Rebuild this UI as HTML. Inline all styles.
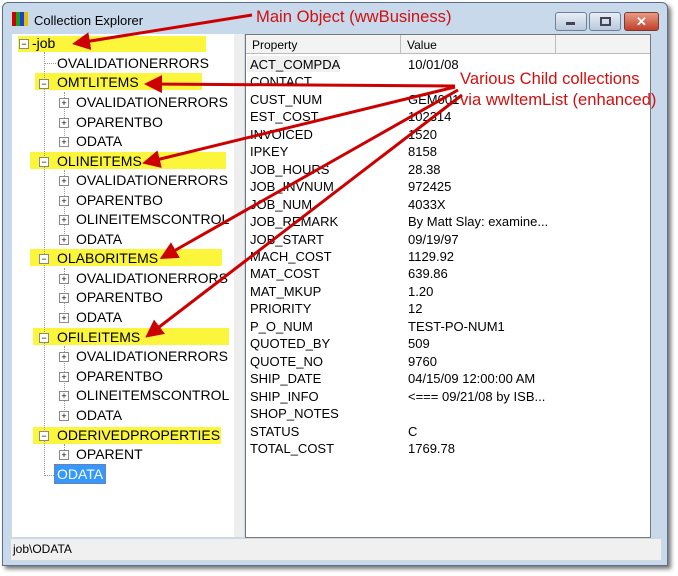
<!DOCTYPE html><html><head><style>
body{margin:0;width:678px;height:576px;background:#fff;position:relative;overflow:hidden;font-family:"Liberation Sans",sans-serif;}
.a{position:absolute}
.win{left:2px;top:2px;width:664px;height:562px;background:#c9d9ec;border:1px solid #5d6f86;border-radius:6px 6px 0 0;box-shadow:3px 3px 4px #777}
.t{font-size:14px;color:#000;white-space:nowrap}
.hl{background:#fbf53c}
.box{width:8px;height:8px;border:1px solid #888;background:#fff;font-size:9px;line-height:8px;text-align:center;color:#000}
.dv{border-left:1px dotted #999}
.dh{border-top:1px dotted #999}
</style></head><body>
<div class="a win"></div>
<div class="a" style="left:12px;top:12px;width:16px;height:14px;background:linear-gradient(90deg,#c00 0 25%,#1a9e1a 25% 50%,#1a3ee0 50% 75%,#e0c000 75%)"></div>
<div class="a t" style="left:34px;top:13px;font-size:13px">Collection Explorer</div>
<div class="a" style="left:555px;top:12px;width:30px;height:17px;border:1px solid #6e7f96;border-radius:3px;background:linear-gradient(#e8eef6,#b9c9dc)"><div class="a" style="left:10px;top:9px;width:9px;height:3px;background:#445"></div></div>
<div class="a" style="left:589px;top:12px;width:30px;height:17px;border:1px solid #6e7f96;border-radius:3px;background:linear-gradient(#e8eef6,#b9c9dc)"><div class="a" style="left:10px;top:4px;width:7px;height:5px;border:2px solid #445"></div></div>
<div class="a" style="left:624px;top:12px;width:33px;height:17px;border:1px solid #7a3a2a;border-radius:3px;background:linear-gradient(#e89a85,#c2402a);color:#fff;font-weight:bold;font-size:13px;text-align:center;line-height:17px">✕</div>
<div class="a" style="left:12px;top:34px;width:222px;height:503px;background:#fff"></div>
<div class="a" style="left:234px;top:34px;width:10px;height:503px;background:#eeeeee"></div>
<div class="a" style="left:245px;top:34px;width:404px;height:502px;background:#fff;border:1px solid #777"></div>
<div class="a" style="left:246px;top:35px;width:404px;height:18px;background:#f3f3f3;border-bottom:1px solid #bbb"></div>
<div class="a" style="left:400px;top:35px;width:1px;height:18px;background:#bbb"></div>
<div class="a" style="left:555px;top:35px;width:1px;height:18px;background:#bbb"></div>
<div class="a t" style="left:252px;top:38px;font-size:12px">Property</div>
<div class="a t" style="left:407px;top:38px;font-size:12px">Value</div>
<div class="a" style="left:247px;top:56px;width:93px;height:16px;background:#f0f0f0"></div>
<div class="a" style="left:250px;top:56px;font-size:13px;line-height:17.45px;white-space:pre">ACT_COMPDA
CONTACT
CUST_NUM
EST_COST
INVOICED
IPKEY
JOB_HOURS
JOB_INVNUM
JOB_NUM
JOB_REMARK
JOB_START
MACH_COST
MAT_COST
MAT_MKUP
PRIORITY
P_O_NUM
QUOTED_BY
QUOTE_NO
SHIP_DATE
SHIP_INFO
SHOP_NOTES
STATUS
TOTAL_COST</div>
<div class="a" style="left:408px;top:56px;font-size:13px;line-height:17.45px;white-space:pre">10/01/08

GEM001
102314
1520
8158
28.38
972425
4033X
By Matt Slay: examine...
09/19/97
1129.92
639.86
1.20
12
TEST-PO-NUM1
509
9760
04/15/09 12:00:00 AM
&lt;=== 09/21/08 by ISB...

C
1769.78</div>
<div class="a" style="left:10px;top:538px;width:650px;height:21px;background:#f0f0f0;border:1px solid #d0d8e0"></div>
<div class="a t" style="left:13px;top:542px;font-size:12px">job\ODATA</div>
<div class="a hl" style="left:18px;top:36px;width:188px;height:16px"></div>
<div class="a hl" style="left:35px;top:73px;width:167px;height:17px"></div>
<div class="a hl" style="left:30px;top:152px;width:196px;height:17px"></div>
<div class="a hl" style="left:30px;top:249px;width:192px;height:17px"></div>
<div class="a hl" style="left:33px;top:328px;width:196px;height:17px"></div>
<div class="a hl" style="left:33px;top:427px;width:188px;height:17px"></div>
<div class="a dv" style="left:44px;top:52px;height:424px"></div>
<div class="a dv" style="left:64px;top:92px;height:52px"></div>
<div class="a dv" style="left:64px;top:170px;height:72px"></div>
<div class="a dv" style="left:64px;top:268px;height:52px"></div>
<div class="a dv" style="left:64px;top:346px;height:72px"></div>
<div class="a dv" style="left:64px;top:444px;height:12px"></div>
<div class="a dh" style="left:44px;top:475px;width:10px"></div>
<div class="a dh" style="left:44px;top:63px;width:12px"></div>
<div class="a box" style="left:19px;top:39px">−</div><div class="a t" style="left:32px;top:35px">-job</div>
<div class="a t" style="left:57px;top:55px">OVALIDATIONERRORS</div>
<div class="a box" style="left:39px;top:79px">−</div><div class="a t" style="left:57px;top:74px">OMTLITEMS</div>
<div class="a box" style="left:59px;top:98px">+</div><div class="a t" style="left:76px;top:94px">OVALIDATIONERRORS</div>
<div class="a box" style="left:59px;top:118px">+</div><div class="a t" style="left:76px;top:114px">OPARENTBO</div>
<div class="a box" style="left:59px;top:137px">+</div><div class="a t" style="left:76px;top:133px">ODATA</div>
<div class="a box" style="left:39px;top:157px">−</div><div class="a t" style="left:57px;top:153px">OLINEITEMS</div>
<div class="a box" style="left:59px;top:176px">+</div><div class="a t" style="left:76px;top:172px">OVALIDATIONERRORS</div>
<div class="a box" style="left:59px;top:196px">+</div><div class="a t" style="left:76px;top:192px">OPARENTBO</div>
<div class="a box" style="left:59px;top:215px">+</div><div class="a t" style="left:76px;top:211px">OLINEITEMSCONTROL</div>
<div class="a box" style="left:59px;top:235px">+</div><div class="a t" style="left:76px;top:231px">ODATA</div>
<div class="a box" style="left:39px;top:254px">−</div><div class="a t" style="left:57px;top:250px">OLABORITEMS</div>
<div class="a box" style="left:59px;top:274px">+</div><div class="a t" style="left:76px;top:270px">OVALIDATIONERRORS</div>
<div class="a box" style="left:59px;top:293px">+</div><div class="a t" style="left:76px;top:289px">OPARENTBO</div>
<div class="a box" style="left:59px;top:313px">+</div><div class="a t" style="left:76px;top:309px">ODATA</div>
<div class="a box" style="left:39px;top:333px">−</div><div class="a t" style="left:57px;top:329px">OFILEITEMS</div>
<div class="a box" style="left:59px;top:352px">+</div><div class="a t" style="left:76px;top:348px">OVALIDATIONERRORS</div>
<div class="a box" style="left:59px;top:372px">+</div><div class="a t" style="left:76px;top:368px">OPARENTBO</div>
<div class="a box" style="left:59px;top:391px">+</div><div class="a t" style="left:76px;top:387px">OLINEITEMSCONTROL</div>
<div class="a box" style="left:59px;top:411px">+</div><div class="a t" style="left:76px;top:407px">ODATA</div>
<div class="a box" style="left:39px;top:431px">−</div><div class="a t" style="left:57px;top:427px">ODERIVEDPROPERTIES</div>
<div class="a box" style="left:59px;top:450px">+</div><div class="a t" style="left:76px;top:446px">OPARENT</div>
<div class="a t" style="left:54px;top:464px;background:#3399ff;color:#fff;padding:1px 2px;border:1px dotted #a66">ODATA</div>
<svg class="a" style="left:0;top:0" width="678" height="576">
<defs><marker id="m" markerWidth="6" markerHeight="6" refX="4" refY="3" orient="auto"><path d="M0,0L6,3L0,6z" fill="#c00"/></marker></defs>
<g stroke="#c00" stroke-width="3" fill="none" marker-end="url(#m)">
<line x1="252" y1="15" x2="78" y2="43"/>
<line x1="455" y1="86" x2="150" y2="84"/>
<line x1="455" y1="87" x2="148" y2="162"/>
<line x1="458" y1="90" x2="165" y2="256"/>
<line x1="462" y1="95" x2="150" y2="334"/>
</g>
<g fill="#d01010" font-family="Liberation Sans, sans-serif" font-size="16.6">
<text x="256" y="22">Main Object (wwBusiness)</text>
<text x="460" y="84">Various Child collections</text>
<text x="460" y="105">via wwItemList (enhanced)</text>
</g>
</svg>
</body></html>
